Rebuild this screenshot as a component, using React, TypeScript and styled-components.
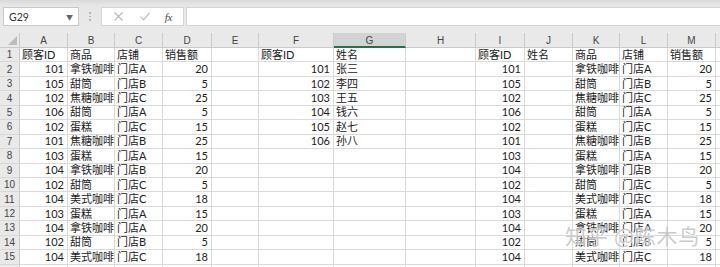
import React from "react";
import styled, { createGlobalStyle } from "styled-components";

const GlobalStyle = createGlobalStyle`
  html, body { margin: 0; padding: 0; background: #ffffff; overflow: hidden; }
  body { font-family: "Lato", "Noto Sans CJK SC", sans-serif; }
`;

const COLS = [
  { key: "A", w: 48 },
  { key: "B", w: 47 },
  { key: "C", w: 48 },
  { key: "D", w: 49 },
  { key: "E", w: 47 },
  { key: "F", w: 75 },
  { key: "G", w: 72 },
  { key: "H", w: 70 },
  { key: "I", w: 49 },
  { key: "J", w: 48 },
  { key: "K", w: 47 },
  { key: "L", w: 48 },
  { key: "M", w: 48 },
  { key: "N", w: 60 },
];

type Cell = string | number | null;

const sales: [number, string, string, number][] = [
  [101, "拿铁咖啡", "门店A", 20],
  [105, "甜筒", "门店B", 5],
  [102, "焦糖咖啡", "门店C", 25],
  [106, "甜筒", "门店A", 5],
  [102, "蛋糕", "门店C", 15],
  [101, "焦糖咖啡", "门店B", 25],
  [103, "蛋糕", "门店A", 15],
  [104, "拿铁咖啡", "门店B", 20],
  [102, "甜筒", "门店C", 5],
  [104, "美式咖啡", "门店C", 18],
  [103, "蛋糕", "门店A", 15],
  [104, "拿铁咖啡", "门店A", 20],
  [102, "甜筒", "门店B", 5],
  [104, "美式咖啡", "门店C", 18],
];

const names: [number, string][] = [
  [101, "张三"],
  [102, "李四"],
  [103, "王五"],
  [104, "钱六"],
  [105, "赵七"],
  [106, "孙八"],
];

const buildRows = (): Cell[][] => {
  const rows: Cell[][] = [];
  rows.push(["顾客ID", "商品", "店铺", "销售额", null, "顾客ID", "姓名", null, "顾客ID", "姓名", "商品", "店铺", "销售额", null]);
  for (let i = 0; i < 15; i++) {
    const s = sales[i];
    const n = names[i];
    rows.push([
      s ? s[0] : null,
      s ? s[1] : null,
      s ? s[2] : null,
      s ? s[3] : null,
      null,
      n ? n[0] : null,
      n ? n[1] : null,
      null,
      s ? s[0] : null,
      null,
      s ? s[1] : null,
      s ? s[2] : null,
      s ? s[3] : null,
      null,
    ]);
  }
  return rows;
};

const Page = styled.div`
  width: 720px;
  height: 267px;
  overflow: hidden;
  display: flex;
  flex-direction: column;
  background: #ffffff;
`;

const Toolbar = styled.div`
  height: 33px;
  flex: none;
  display: flex;
  align-items: flex-start;
  padding-top: 7px;
  box-sizing: border-box;
  background: linear-gradient(#d9d9d9 0px, #e6e6e6 5px, #eaeaea 100%);
`;

const NameBox = styled.div`
  margin-left: 3px;
  width: 76px;
  height: 19px;
  box-sizing: border-box;
  background: #ffffff;
  border: 1px solid #c8c8c8;
  display: flex;
  align-items: center;
  justify-content: space-between;
  padding: 0 5px 0 5px;
  font-size: 10.5px;
  color: #333;
`;

const Caret = styled.span`
  font-size: 7px;
  color: #666;
`;

const Grip = styled.div`
  width: 22px;
  height: 19px;
  display: flex;
  flex-direction: column;
  align-items: center;
  justify-content: center;
  gap: 2px;
  & > i {
    display: block;
    width: 1.5px;
    height: 1.5px;
    background: #b4b4b4;
  }
`;

const FxBox = styled.div`
  width: 83px;
  height: 19px;
  box-sizing: border-box;
  background: #ffffff;
  border: 1px solid #d4d4d4;
  display: flex;
  align-items: center;
  justify-content: space-around;
  padding: 0 4px;
`;

const FxText = styled.span`
  font-family: "Liberation Serif", serif;
  font-style: italic;
  font-size: 11px;
  color: #444;
  letter-spacing: -0.5px;
`;

const FormulaInput = styled.div`
  flex: 1;
  margin-left: 2px;
  height: 19px;
  box-sizing: border-box;
  background: #ffffff;
  border: 1px solid #d4d4d4;
  border-right: none;
`;

const Sheet = styled.div`
  position: relative;
  flex: 1;
  display: grid;
  grid-template-columns: 20px ${COLS.map((c) => c.w + "px").join(" ")};
  grid-template-rows: 15px;
  grid-auto-rows: 14.45px;
  overflow: hidden;
`;

const Corner = styled.div`
  position: relative;
  background: #e9e9e9;
  border-right: 1px solid #c9c9c9;
  border-bottom: 1px solid #c9c9c9;
  box-sizing: border-box;
  &::after {
    content: "";
    position: absolute;
    right: 2px;
    bottom: 2px;
    width: 0;
    height: 0;
    border-left: 9px solid transparent;
    border-bottom: 9px solid #bdbdbd;
  }
`;

const ColHead = styled.div<{ $selected?: boolean }>`
  box-sizing: border-box;
  background: ${(p) => (p.$selected ? "#d3d3d3" : "#e9e9e9")};
  border-right: 1px solid #cbcbcb;
  border-bottom: ${(p) => (p.$selected ? "2px solid #217346" : "1px solid #c9c9c9")};
  display: flex;
  align-items: center;
  justify-content: center;
  font-family: "Liberation Sans", sans-serif;
  font-size: 10px;
  color: ${(p) => (p.$selected ? "#3c4a40" : "#444")};
  padding-top: 1px;
`;

const RowHead = styled.div`
  box-sizing: border-box;
  background: #e9e9e9;
  border-right: 1px solid #c9c9c9;
  border-bottom: 1px solid #d8d8d8;
  display: flex;
  align-items: center;
  justify-content: center;
  font-family: "Liberation Sans", sans-serif;
  font-size: 10px;
  color: #444;
`;

const DataCell = styled.div<{ $num?: boolean }>`
  box-sizing: border-box;
  border-right: 1px solid #dadada;
  border-bottom: 1px solid #dadada;
  display: flex;
  align-items: center;
  justify-content: ${(p) => (p.$num ? "flex-end" : "flex-start")};
  padding: 0 ${(p) => (p.$num ? "3px" : "0")} 0 ${(p) => (p.$num ? "0" : "2px")};
  font-family: "Lato", "Noto Sans CJK SC", sans-serif;
  font-size: 11px;
  line-height: 14px;
  color: #222;
  white-space: nowrap;
  overflow: visible;
`;

const Watermark = styled.div`
  position: absolute;
  left: 565px;
  top: 187px;
  font-family: "Noto Sans CJK SC", sans-serif;
  font-size: 21px;
  letter-spacing: 0.8px;
  color: rgba(150, 150, 150, 0.5);
  text-shadow: 0 0 1px rgba(255, 255, 255, 0.9), 1px 1px 0 rgba(255, 255, 255, 0.6);
  pointer-events: none;
  white-space: nowrap;
`;

const CrossIcon = () => (
  <svg width="11" height="11" viewBox="0 0 11 11">
    <path d="M1.5 1.5 L9.5 9.5 M9.5 1.5 L1.5 9.5" stroke="#b9b9b9" strokeWidth="1.1" fill="none" />
  </svg>
);

const CheckIcon = () => (
  <svg width="12" height="11" viewBox="0 0 12 11">
    <path d="M1.5 5.5 L4.5 8.8 L10.5 1.8" stroke="#b9b9b9" strokeWidth="1.1" fill="none" />
  </svg>
);

export default function App() {
  const rows = buildRows();
  return (
    <Page>
      <GlobalStyle />
      <Toolbar>
        <NameBox>
          <span>G29</span>
          <Caret>▼</Caret>
        </NameBox>
        <Grip>
          <i />
          <i />
          <i />
        </Grip>
        <FxBox>
          <CrossIcon />
          <CheckIcon />
          <FxText>fx</FxText>
        </FxBox>
        <FormulaInput />
      </Toolbar>
      <Sheet>
        <Corner />
        {COLS.map((c) => (
          <ColHead key={c.key} $selected={c.key === "G"}>
            {c.key}
          </ColHead>
        ))}
        {rows.map((row, ri) => (
          <React.Fragment key={ri}>
            <RowHead>{ri + 1}</RowHead>
            {row.map((v, ci) => (
              <DataCell key={ci} $num={typeof v === "number"}>
                {v ?? ""}
              </DataCell>
            ))}
          </React.Fragment>
        ))}
        <Watermark>知乎 @陈木鸟</Watermark>
      </Sheet>
    </Page>
  );
}
